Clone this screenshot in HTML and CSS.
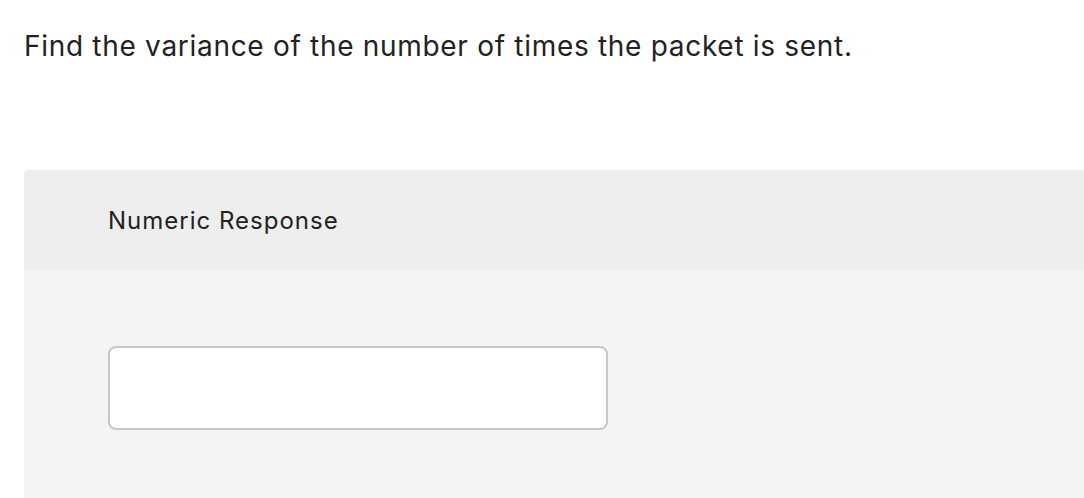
FILE: index.html
```html
<!DOCTYPE html>
<html>
<head>
<meta charset="utf-8">
<link rel="stylesheet" href="styles.css">
</head>
<body>
<div class="page">
  <p class="question">Find the variance of the number of times the packet is sent.</p>
  <section class="panel">
    <div class="panel-head">Numeric Response</div>
    <div class="panel-body">
      <input class="answer" type="text" aria-label="Numeric Response">
    </div>
  </section>
</div>
</body>
</html>
```
FILE: styles.css
```css
html, body {
  margin: 0;
  padding: 0;
  background: #ffffff;
  overflow: hidden;
}
.page {
  font-family: "Inter", "Liberation Sans", sans-serif;
  color: #222222;
  padding-left: 24px;
  height: 498px;
  overflow: hidden;
}
.question {
  margin: 0;
  padding-top: 28px;
  font-size: 28px;
  letter-spacing: 0.7px;
  line-height: 36px;
  height: 142px;
}
.panel {
  width: 1100px;
  border-top-left-radius: 4px;
  overflow: hidden;
}
.panel-head {
  background: #eeeeee;
  height: 100px;
  box-sizing: border-box;
  padding-left: 84px;
  padding-top: 36px;
  font-size: 24px;
  letter-spacing: 1px;
  line-height: 30px;
}
.panel-body {
  background: #f4f4f4;
  height: 228px;
  padding-left: 84px;
  padding-top: 76px;
  box-sizing: border-box;
}
.answer {
  display: block;
  width: 500px;
  height: 84px;
  box-sizing: border-box;
  border: 2px solid #c6c6c6;
  border-radius: 8px;
  background: #ffffff;
  margin: 0;
  padding: 0 12px;
  outline: none;
}
```
